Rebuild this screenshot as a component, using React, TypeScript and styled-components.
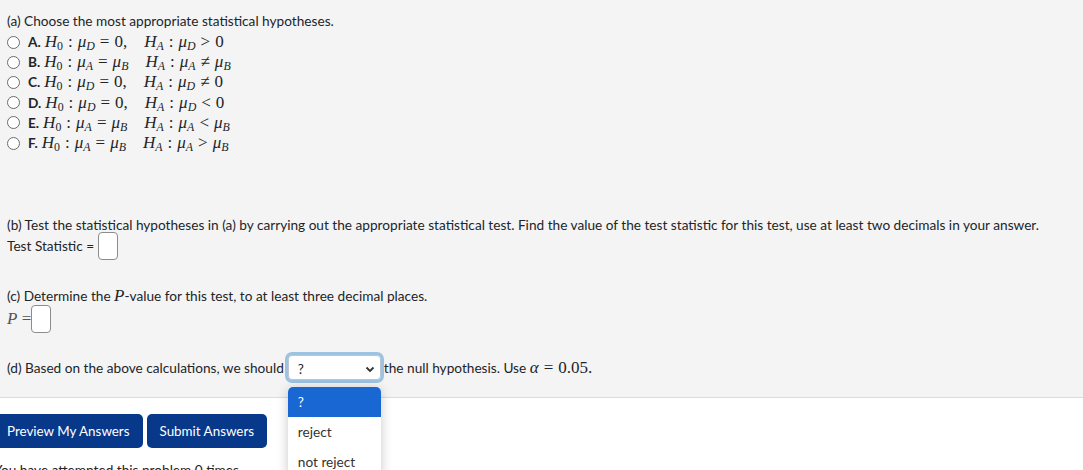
import React from "react";
import styled, { createGlobalStyle } from "styled-components";

const GlobalStyle = createGlobalStyle`
  html, body {
    margin: 0;
    padding: 0;
    background: #fff;
    overflow: hidden;
  }
  body {
    font-family: "Segoe UI", Lato, "Open Sans", sans-serif;
    font-size: 13.65px;
    color: #212529;
  }
`;

const Problem = styled.div`
  background: #f4f4f4;
  border-bottom: 1px solid #dcdcdc;
  padding: 12px 7px 0 7px;
  box-sizing: border-box;
  height: 398px;
`;

const Para = styled.div<{ $top?: number }>`
  margin-top: ${({ $top }) => $top ?? 0}px;
  line-height: 18px;
  white-space: nowrap;
`;

const Choices = styled.div`
  display: flex;
  flex-direction: column;
  margin-top: 2px;
`;

const Choice = styled.label`
  display: flex;
  align-items: center;
  height: 20.2px;
  line-height: 20px;
  white-space: nowrap;
`;

const Radio = styled.span`
  width: 11px;
  height: 11px;
  border: 1px solid #6d6d6d;
  border-radius: 50%;
  background: #fff;
  margin-right: 8px;
  flex-shrink: 0;
`;

const Letter = styled.b`
  font-weight: 700;
  margin-right: 4px;
`;

const Math = styled.span`
  font-family: "Liberation Serif", "DejaVu Serif", serif;
  font-size: 17px;
  line-height: 20px;
  white-space: nowrap;
`;

const V = styled.i`
  font-style: italic;
`;

const Sub = styled.sub`
  font-size: 70%;
  vertical-align: -3px;
  line-height: 0;
`;

const Op = styled.span`
  margin: 0 5px;
`;

const Quad = styled.span`
  display: inline-block;
  width: 17px;
`;

const InlineRow = styled.div<{ $top?: number }>`
  display: flex;
  align-items: center;
  margin-top: ${({ $top }) => $top ?? 0}px;
  white-space: nowrap;
`;

const AnswerBox = styled.span`
  display: inline-block;
  width: 18px;
  height: 26px;
  border: 1px solid #8c8c8c;
  border-radius: 4px;
  background: #fff;
`;

const PLabel = styled.span`
  font-family: "Liberation Serif", serif;
  font-size: 17px;
  color: #555;
`;

const SelectWrap = styled.span`
  position: relative;
  display: inline-block;
  margin: 0 3px 0 4px;
`;

const Select = styled.span`
  display: flex;
  align-items: center;
  justify-content: space-between;
  height: 25px;
  width: 93px;
  padding: 3px 5px 0 9px;
  box-sizing: border-box;
  background: #fff;
  border: 1px solid #b9c7d6;
  border-radius: 4px;
  box-shadow: 0 0 0 3px #9dc3e3;
`;

const Menu = styled.div`
  position: absolute;
  left: 0;
  top: 32px;
  width: 93px;
  background: #fff;
  border-radius: 5px 5px 0 0;
  box-shadow: 0 2px 12px rgba(0, 0, 0, 0.22);
  overflow: hidden;
  z-index: 5;
`;

const MenuItem = styled.div<{ $active?: boolean }>`
  height: 30px;
  line-height: 30px;
  padding-left: 10px;
  background: ${({ $active }) => ($active ? "#1967d2" : "#fff")};
  color: ${({ $active }) => ($active ? "#fff" : "#333")};
`;

const Buttons = styled.div`
  display: flex;
  gap: 4px;
  margin: 16px 0 0 -6px;
`;

const Button = styled.button`
  font-family: inherit;
  font-size: 13.4px;
  color: #fff;
  background: #07388a;
  border: none;
  border-radius: 5px;
  height: 34px;
  padding: 0 13px;
`;

const Attempts = styled.div`
  margin: 14px 0 0 -6px;
  white-space: nowrap;
`;

const H0 = () => (
  <>
    <V>H</V>
    <Sub>0</Sub>
    <Op>:</Op>
  </>
);

const HA = () => (
  <>
    <V>H</V>
    <Sub>
      <V>A</V>
    </Sub>
    <Op>:</Op>
  </>
);

const Mu = ({ s }: { s: string }) => (
  <>
    <V>μ</V>
    <Sub>
      <V>{s}</V>
    </Sub>
  </>
);

const choices: { letter: string; left: React.ReactNode; right: React.ReactNode }[] = [
  {
    letter: "A.",
    left: (<><H0 /><Mu s="D" /><Op>=</Op>0,</>),
    right: (<><HA /><Mu s="D" /><Op>&gt;</Op>0</>),
  },
  {
    letter: "B.",
    left: (<><H0 /><Mu s="A" /><Op>=</Op><Mu s="B" /></>),
    right: (<><HA /><Mu s="A" /><Op>≠</Op><Mu s="B" /></>),
  },
  {
    letter: "C.",
    left: (<><H0 /><Mu s="D" /><Op>=</Op>0,</>),
    right: (<><HA /><Mu s="D" /><Op>≠</Op>0</>),
  },
  {
    letter: "D.",
    left: (<><H0 /><Mu s="D" /><Op>=</Op>0,</>),
    right: (<><HA /><Mu s="D" /><Op>&lt;</Op>0</>),
  },
  {
    letter: "E.",
    left: (<><H0 /><Mu s="A" /><Op>=</Op><Mu s="B" /></>),
    right: (<><HA /><Mu s="A" /><Op>&lt;</Op><Mu s="B" /></>),
  },
  {
    letter: "F.",
    left: (<><H0 /><Mu s="A" /><Op>=</Op><Mu s="B" /></>),
    right: (<><HA /><Mu s="A" /><Op>&gt;</Op><Mu s="B" /></>),
  },
];

const Chevron = () => (
  <svg width="10" height="7" viewBox="0 0 10 7">
    <polyline points="1.5,1.5 5,5 8.5,1.5" fill="none" stroke="#333" strokeWidth="1.8" />
  </svg>
);

const App = () => {
  return (
    <>
      <GlobalStyle />
      <Problem>
        <Para>(a) Choose the most appropriate statistical hypotheses.</Para>
        <Choices>
          {choices.map((c) => (
            <Choice key={c.letter}>
              <Radio />
              <Letter>{c.letter}</Letter>
              <Math>
                {c.left}
                <Quad />
                {c.right}
              </Math>
            </Choice>
          ))}
        </Choices>
        <Para $top={63}>
          (b) Test the statistical hypotheses in (a) by carrying out the appropriate statistical test. Find the
          value of the test statistic for this test, use at least two decimals in your answer.
        </Para>
        <InlineRow $top={-2}>
          Test Statistic =&nbsp;
          <AnswerBox />
        </InlineRow>
        <Para $top={26}>
          (c) Determine the <Math><V>P</V></Math>-value for this test, to at least three decimal places.
        </Para>
        <InlineRow $top={-1}>
          <PLabel>
            <V>P</V> =
          </PLabel>
          <AnswerBox />
        </InlineRow>
        <InlineRow $top={22}>
          (d) Based on the above calculations, we should
          <SelectWrap>
            <Select>
              <span>?</span>
              <Chevron />
            </Select>
            <Menu>
              <MenuItem $active>?</MenuItem>
              <MenuItem>reject</MenuItem>
              <MenuItem>not reject</MenuItem>
            </Menu>
          </SelectWrap>
          the null hypothesis. Use&nbsp;
          <Math>
            <V>α</V>
            <Op>=</Op>0.05.
          </Math>
        </InlineRow>
      </Problem>
      <Buttons>
        <Button>Preview My Answers</Button>
        <Button>Submit Answers</Button>
      </Buttons>
      <Attempts>You have attempted this problem 0 times.</Attempts>
    </>
  );
};

export default App;
